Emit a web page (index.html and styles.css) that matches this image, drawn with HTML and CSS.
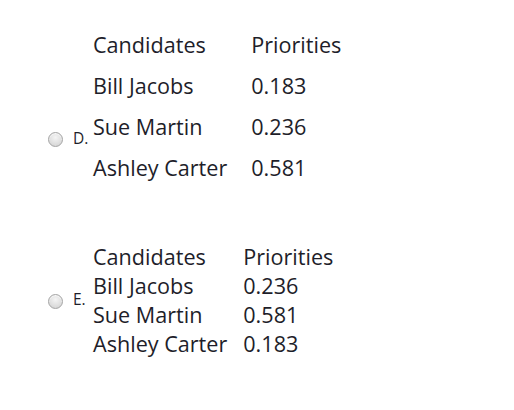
FILE: index.html
```html
<!DOCTYPE html>
<html>
<head>
<meta charset="utf-8">
<link rel="stylesheet" href="styles.css">
</head>
<body>
<div class="page">
  <div class="option option-d">
    <span class="radio"></span>
    <span class="letter">D.</span>
    <table class="cands cands-wide">
      <tr><td>Candidates</td><td>Priorities</td></tr>
      <tr><td>Bill Jacobs</td><td>0.183</td></tr>
      <tr><td>Sue Martin</td><td>0.236</td></tr>
      <tr><td>Ashley Carter</td><td>0.581</td></tr>
    </table>
  </div>
  <div class="option option-e">
    <span class="radio"></span>
    <span class="letter">E.</span>
    <table class="cands cands-tight">
      <tr><td>Candidates</td><td>Priorities</td></tr>
      <tr><td>Bill Jacobs</td><td>0.236</td></tr>
      <tr><td>Sue Martin</td><td>0.581</td></tr>
      <tr><td>Ashley Carter</td><td>0.183</td></tr>
    </table>
  </div>
</div>
</body>
</html>
```
FILE: styles.css
```css
html, body {
  margin: 0;
  padding: 0;
  background: #fff;
}
body {
  font-family: "Open Sans", "Liberation Sans", sans-serif;
  color: #1e1e2a;
}
.page {
  padding: 24px 0 0 48px;
}
.option {
  display: flex;
  align-items: flex-start;
}
.option-e {
  margin-top: 54px;
}
.radio {
  flex: none;
  width: 13px;
  height: 13px;
  border: 1px solid #a4a4a4;
  border-radius: 50%;
  background: radial-gradient(circle at 50% 35%, #f4f4f4 0%, #dedede 60%, #cfcfcf 100%);
  box-shadow: inset 0 1px 1px rgba(255,255,255,0.8);
}
.letter {
  font-size: 15.5px;
  line-height: 18px;
  width: 20px;
  margin-left: 10px;
  flex: none;
}
.option-d .radio { margin-top: 108px; }
.option-d .letter { margin-top: 105px; }
.option-e .radio { margin-top: 52px; }
.option-e .letter { margin-top: 48px; }
.cands {
  border-collapse: collapse;
  font-size: 21.6px;
  line-height: 27px;
}
.cands td {
  padding: 0;
  white-space: nowrap;
}
.cands-wide td {
  padding-top: 7px;
  padding-bottom: 7px;
}
.cands-wide td:first-child { padding-right: 24px; }
.cands-tight td {
  padding-top: 1px;
  padding-bottom: 1px;
}
.cands-tight td:first-child { padding-right: 16px; }
```
